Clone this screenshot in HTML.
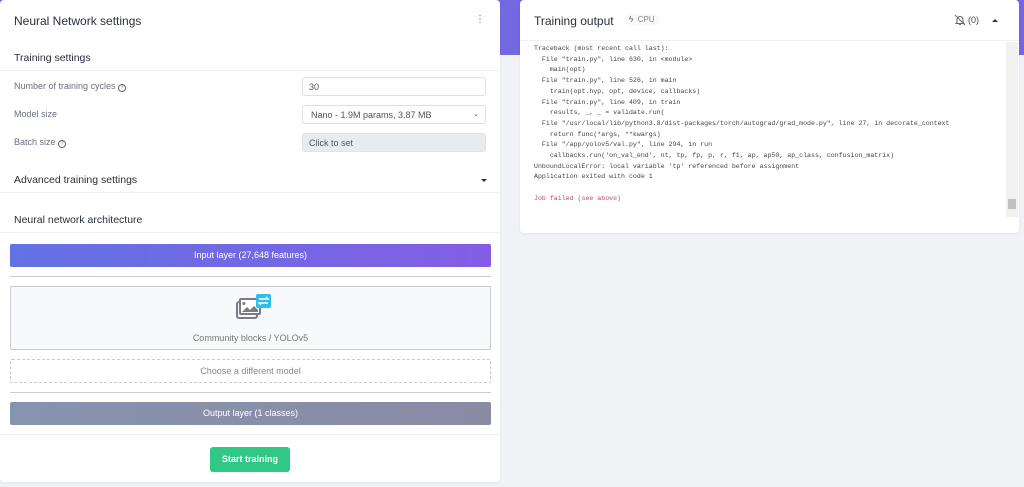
<!DOCTYPE html>
<html><head><meta charset="utf-8"><style>
*{box-sizing:border-box;margin:0;padding:0}
body{width:1024px;height:487px;overflow:hidden;background:#f1f2f6;font-family:"Liberation Sans",sans-serif;position:relative;color:#2b2f3e}
.band{position:absolute;left:0;top:0;width:1024px;height:55px;background:linear-gradient(90deg,#6a6fe0,#7a63e0)}
.card{position:absolute;background:#fff;border-radius:4px;box-shadow:0 1px 3px rgba(0,0,0,.06)}
.l{left:0;top:0;width:500px;height:482px}
.r{left:520px;top:0;width:499px;height:233px}
.t{position:absolute;font-size:11px;color:#2b2f3e}
.h{font-size:12px}
.lab{position:absolute;left:14px;font-size:9px;color:#6b7080}
.in{position:absolute;left:302px;width:184px;height:19px;border:1px solid #dde0e6;border-radius:3px;font-size:9px;color:#555;padding:4px 6px}
.hr{position:absolute;left:0;width:500px;height:1px;background:#eef0f3}
.q{display:inline-block;width:8px;height:8px;border:1px solid #666;border-radius:50%;font-size:6px;line-height:6px;text-align:center;vertical-align:0}
.bar{position:absolute;left:10px;width:481px;height:23px;border-radius:2px;color:#fff;font-size:9px;text-align:center;line-height:23px}
pre{position:absolute;left:14px;top:44px;font-family:"Liberation Mono",monospace;font-size:6.6px;line-height:10.7px;color:#444}
</style></head><body>
<div class="band"></div>
<div class="card l">
<div class="t h" style="left:14px;top:14px">Neural Network settings</div>
<div class="t" style="left:475px;top:14px;font-size:10px;color:#666">⋮</div>
<div class="t" style="left:14px;top:52px;font-size:10.5px">Training settings</div>
<div class="hr" style="top:70px"></div>
<div class="lab" style="top:81px">Number of training cycles <span class="q">?</span></div>
<div class="in" style="top:77px">30</div>
<div class="lab" style="top:109px">Model size</div>
<div class="in" style="top:105px;padding-left:8px">Nano - 1.9M params, 3.87 MB<span style="float:right;font-size:7px">⌄</span></div>
<div class="lab" style="top:137px">Batch size <span class="q">?</span></div>
<div class="in" style="top:133px;background:#e9ecef;border-color:#e0e3e8">Click to set</div>
<div class="t" style="left:14px;top:174px;font-size:10.5px">Advanced training settings</div>
<div style="position:absolute;left:481px;top:179px;border-left:3px solid transparent;border-right:3px solid transparent;border-top:3px solid #333"></div>
<div class="hr" style="top:192px"></div>
<div class="t" style="left:14px;top:214px;font-size:10.5px">Neural network architecture</div>
<div class="hr" style="top:232px"></div>
<div class="bar" style="top:244px;background:linear-gradient(90deg,#6272e4,#835ee4)">Input layer (27,648 features)</div>
<div style="position:absolute;left:10px;top:276px;width:481px;height:1px;background:#ccc"></div>
<div style="position:absolute;left:10px;top:286px;width:481px;height:64px;border:1px solid #c9ccd2;border-radius:2px;background:#f8f9fb"></div>
<svg style="position:absolute;left:236px;top:294px" width="36" height="28" viewBox="0 0 36 28">
<rect x="1" y="8" width="20" height="16" rx="2" fill="none" stroke="#777c88" stroke-width="2"/>
<rect x="4" y="5" width="20" height="15" rx="1" fill="#fff" stroke="#777c88" stroke-width="2"/>
<circle cx="8" cy="9.5" r="1.5" fill="#777c88"/><path d="M6 18l5-5 3 3 4-4 4 4v2H6z" fill="#777c88"/>
<rect x="20" y="0" width="15" height="14" rx="2" fill="#2ebfe8"/>
<path d="M23 5h9l-2-2M32 9h-9l2 2" stroke="#fff" stroke-width="1.4" fill="none"/>
</svg>
<div class="t" style="left:10px;width:481px;text-align:center;top:333px;font-size:9px;color:#777">Community blocks / YOLOv5</div>
<div style="position:absolute;left:10px;top:359px;width:481px;height:24px;border:1px dashed #ccc;border-radius:2px;font-size:9px;color:#888;text-align:center;line-height:22px">Choose a different model</div>
<div style="position:absolute;left:10px;top:392px;width:481px;height:1px;background:#ccc"></div>
<div class="bar" style="top:402px;background:linear-gradient(90deg,#8794ae,#8a8aa5)">Output layer (1 classes)</div>
<div class="hr" style="top:434px"></div>
<div style="position:absolute;left:210px;top:447px;width:80px;height:25px;background:#2fc985;border-radius:3px;color:#fff;font-size:9px;font-weight:bold;text-align:center;line-height:25px">Start training</div>
</div>
<div class="card r">
<div class="t h" style="left:14px;top:14px">Training output</div>
<div class="t" style="left:104px;top:14px;font-size:8px;color:#888;background:#f7f8fa;padding:1px 5px;border-radius:8px"><span style="color:#555">ϟ</span>&nbsp; CPU</div>
<svg style="position:absolute;left:434px;top:14px" width="12" height="12" viewBox="0 0 12 12"><path d="M3 8.5V5.5a3 3 0 0 1 6 0v3l1 1H2z M5 10.5h2" fill="none" stroke="#666" stroke-width="1"/><path d="M1 1l10 10" stroke="#666" stroke-width="1"/></svg>
<div class="t" style="left:448px;top:15px;font-size:9px;color:#444">(0)</div>
<div style="position:absolute;left:472px;top:19px;border-left:3px solid transparent;border-right:3px solid transparent;border-bottom:3px solid #333"></div>
<div style="position:absolute;left:0;top:40px;width:499px;height:1px;background:#f0f0f0"></div>
<div style="position:absolute;left:486px;top:42px;width:12px;height:175px;background:#f1f1f1"></div>
<div style="position:absolute;left:488px;top:199px;width:8px;height:10px;background:#c1c1c1"></div>
<pre>Traceback (most recent call last):
  File "train.py", line 630, in &lt;module&gt;
    main(opt)
  File "train.py", line 526, in main
    train(opt.hyp, opt, device, callbacks)
  File "train.py", line 409, in train
    results, _, _ = validate.run(
  File "/usr/local/lib/python3.8/dist-packages/torch/autograd/grad_mode.py", line 27, in decorate_context
    return func(*args, **kwargs)
  File "/app/yolov5/val.py", line 294, in run
    callbacks.run('on_val_end', nt, tp, fp, p, r, f1, ap, ap50, ap_class, confusion_matrix)
UnboundLocalError: local variable 'tp' referenced before assignment
Application exited with code 1

<span style="color:#c0466a">Job failed (see above)</span></pre>
</div>
</body></html>
